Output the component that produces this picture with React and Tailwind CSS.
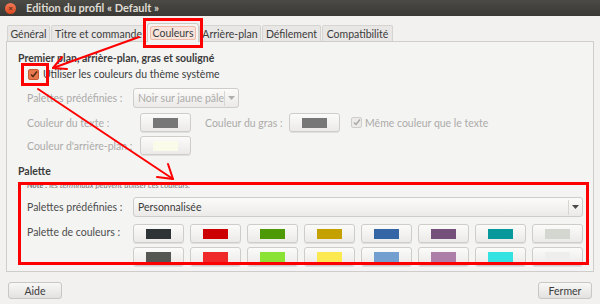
import React from "react";

const row1 = ["#2e3436", "#cc0000", "#4e9a06", "#c4a000", "#3465a4", "#75507b", "#06989a", "#d3d7cf"];
const row2 = ["#555753", "#ef2929", "#8ae234", "#fce94f", "#729fcf", "#ad7fa8", "#34e2e2", "#eeeeec"];

const tabs = [
  { label: "Général", w: "w-[43px]" },
  { label: "Titre et commande", w: "w-[95px]" },
  { label: "Couleurs", w: "w-[52px]", active: true },
  { label: "Arrière-plan", w: "w-[62px]" },
  { label: "Défilement", w: "w-[59px]" },
  { label: "Compatibilité", w: "w-[71px]" },
];

function ColorButton({ color, className = "" }) {
  return (
    <div
      className={`flex items-center justify-center w-[51px] h-[19px] rounded-[3px] border border-[#cfcdca] bg-gradient-to-b from-[#fbfbfa] to-[#ebeae8] shadow-[0_1px_0_#e0dfdd] ${className}`}
    >
      <div className="w-[25px] h-[10px]" style={{ backgroundColor: color }} />
    </div>
  );
}

function Combo({ text, disabled, className = "" }) {
  return (
    <div
      className={`flex items-center h-[20px] rounded-[3px] border border-[#cfcdca] bg-gradient-to-b from-[#fbfbfa] to-[#ebeae8] ${className}`}
    >
      <span className={`flex-1 pl-[4px] ${disabled ? "text-[#acaba9]" : "text-[#3c3c3c]"}`}>{text}</span>
      <div className="h-[15px] border-l border-[#d8d6d3]" />
      <div className="w-[13px] flex justify-center">
        <svg width="7" height="4" viewBox="0 0 7 4">
          <path d="M0 0h7L3.5 4z" fill={disabled ? "#b0afad" : "#4a4a4a"} />
        </svg>
      </div>
    </div>
  );
}

export default function App() {
  return (
    <div className="relative w-[600px] h-[304px] overflow-hidden whitespace-nowrap bg-[#f2f1f0] text-[10.5px] text-[#3c3c3c] font-['Lato',sans-serif] leading-[14px]">
      {/* title bar */}
      <div className="flex items-center h-[16px] bg-gradient-to-b from-[#4b4a45] to-[#3a3935]">
        <div className="ml-[5px] w-[11px] h-[11px] rounded-full bg-gradient-to-b from-[#f27a55] to-[#d9471c] flex items-center justify-center text-[8px] leading-none text-[#5a2a1a] font-bold">
          ×
        </div>
        <span className="ml-[10px] text-[11px] font-bold text-[#dfdbd2]">Edition du profil « Default »</span>
      </div>

      {/* tabs */}
      <div className="flex items-end pl-[7px] h-[25px]">
        {tabs.map((t) =>
          t.active ? (
            <div
              key={t.label}
              className={`${t.w} h-[19px] flex items-center justify-center border border-b-0 border-[#cfcdca] bg-[#f4f4f3] rounded-t-[3px] -mb-px relative z-10`}
            >
              <span className="px-[2px] rounded-[2px] border border-[#f0b9a8] bg-[#f6e4dd] leading-[12px]">{t.label}</span>
            </div>
          ) : (
            <div
              key={t.label}
              className={`${t.w} h-[16px] flex items-center justify-center border border-b-0 border-[#d6d4d1] bg-[#e8e7e5] rounded-t-[2px] mr-px`}
            >
              {t.label}
            </div>
          )
        )}
      </div>

      {/* notebook panel */}
      <div className="mx-[6px] h-[231px] border border-[#cfcdca] bg-[#f4f4f3] pl-[11px] pt-[9px]">
        <div className="font-bold text-[#3c3c3c]">Premier plan, arrière-plan, gras et souligné</div>
        <div className="flex items-center mt-[2px] ml-[10px]">
          <div className="w-[11px] h-[11px] rounded-[2px] bg-[#e8794e] border border-[#c65a32] flex items-center justify-center">
            <svg width="8" height="7" viewBox="0 0 8 7">
              <path d="M1 3.5l2 2 4-5" stroke="#5a2a18" strokeWidth="1.6" fill="none" />
            </svg>
          </div>
          <span className="ml-[4px]">Utiliser les couleurs du thème système</span>
        </div>

        <div className="ml-[9px] text-[#acaba9]">
          <div className="flex items-center mt-[7px]">
            <span className="w-[106px]">Palettes prédéfinies :</span>
            <Combo text="Noir sur jaune pâle" disabled className="w-[106px]" />
          </div>
          <div className="flex items-center mt-[5px]">
            <span className="w-[113px]">Couleur du texte :</span>
            <ColorButton color="#777777" />
            <span className="ml-[14px] w-[84px]">Couleur du gras :</span>
            <ColorButton color="#777777" />
            <div className="ml-[11px] w-[11px] h-[11px] rounded-[2px] border border-[#cfcdca] bg-[#ecebea] flex items-center justify-center">
              <svg width="8" height="7" viewBox="0 0 8 7">
                <path d="M1 3.5l2 2 4-5" stroke="#a9a8a6" strokeWidth="1.5" fill="none" />
              </svg>
            </div>
            <span className="ml-[3px]">Même couleur que le texte</span>
          </div>
          <div className="flex items-center mt-[4px]">
            <span className="w-[113px]">Couleur d'arrière-plan :</span>
            <ColorButton color="#fbfbe9" />
          </div>
        </div>

        <div className="font-bold mt-[9px]">Palette</div>
        <div className="ml-[9px] mt-[3px] text-[8px] leading-[9px] italic text-[#7a7a7a]">
          <span className="font-bold">Note :</span> les terminaux peuvent utiliser ces couleurs.
        </div>
        <div className="ml-[9px] text-[#4c4c4c]">
          <div className="flex items-center mt-[7px]">
            <span className="w-[106px]">Palettes prédéfinies :</span>
            <Combo text="Personnalisée" className="w-[450px]" />
          </div>
          <div className="flex mt-[7px]">
            <span className="w-[106px] pt-[1px]">Palette de couleurs :</span>
            <div className="flex flex-col gap-[4px]">
              <div className="flex gap-[6px]">
                {row1.map((c) => (
                  <ColorButton key={c} color={c} />
                ))}
              </div>
              <div className="flex gap-[6px]">
                {row2.map((c) => (
                  <ColorButton key={c} color={c} />
                ))}
              </div>
            </div>
          </div>
        </div>
      </div>

      {/* footer */}
      <div className="flex justify-between px-[8px] mt-[10px]">
        <button className="w-[54px] h-[17px] rounded-[3px] border border-[#c9c7c4] bg-gradient-to-b from-[#f8f8f7] to-[#e2e1df] text-[#3c3c3c]">
          Aide
        </button>
        <button className="w-[54px] h-[17px] rounded-[3px] border border-[#c9c7c4] bg-gradient-to-b from-[#f8f8f7] to-[#e2e1df] text-[#3c3c3c]">
          Fermer
        </button>
      </div>

      {/* annotations */}
      <svg className="absolute inset-0 pointer-events-none" width="600" height="304" viewBox="0 0 600 304">
        <g fill="none" stroke="#f00" strokeWidth="3">
          <rect x="144.5" y="19.5" width="57" height="27" />
          <rect x="22.5" y="64.5" width="25" height="20" />
          <rect x="19.5" y="183.5" width="568" height="80" />
        </g>
        <g fill="none" stroke="#f00" strokeWidth="2" strokeLinecap="round">
          <path d="M139 37L53 68" />
          <path d="M53 68L67 69M53 68L62 57" />
          <path d="M38 89L173 179" />
          <path d="M173 179L157 177M173 179L168 164" />
        </g>
      </svg>
    </div>
  );
}
